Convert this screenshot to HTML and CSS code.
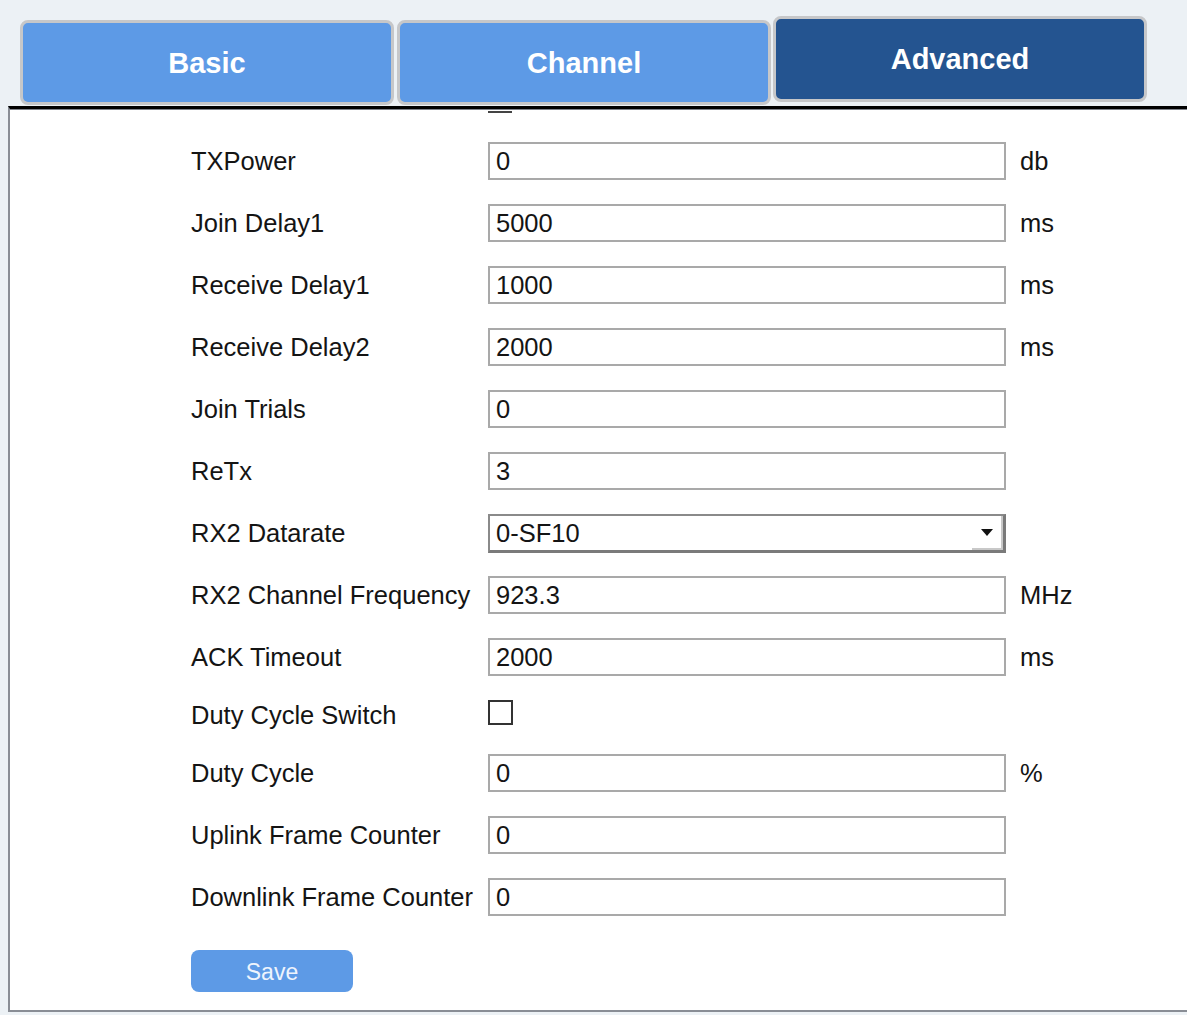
FILE: index.html
```html
<!DOCTYPE html>
<html>
<head>
<meta charset="utf-8">
<link rel="stylesheet" href="styles.css">
</head>
<body>
<div class="tabs">
  <div class="tab">Basic</div>
  <div class="tab">Channel</div>
  <div class="tab active">Advanced</div>
</div>
<div class="panel">
  <div class="clipped"></div>
  <div class="form">
    <div class="label">TXPower</div><div class="field"><div class="input">0</div></div><div class="unit">db</div>
    <div class="label">Join Delay1</div><div class="field"><div class="input">5000</div></div><div class="unit">ms</div>
    <div class="label">Receive Delay1</div><div class="field"><div class="input">1000</div></div><div class="unit">ms</div>
    <div class="label">Receive Delay2</div><div class="field"><div class="input">2000</div></div><div class="unit">ms</div>
    <div class="label">Join Trials</div><div class="field"><div class="input">0</div></div><div class="unit"></div>
    <div class="label">ReTx</div><div class="field"><div class="input">3</div></div><div class="unit"></div>
    <div class="label">RX2 Datarate</div><div class="field"><div class="select"><span>0-SF10</span><span class="arrow"><span class="tri"></span></span></div></div><div class="unit"></div>
    <div class="label">RX2 Channel Frequency</div><div class="field"><div class="input">923.3</div></div><div class="unit">MHz</div>
    <div class="label">ACK Timeout</div><div class="field"><div class="input">2000</div></div><div class="unit">ms</div>
    <div class="label short">Duty Cycle Switch</div><div class="field short"><div class="checkbox"></div></div><div class="unit short"></div>
    <div class="label">Duty Cycle</div><div class="field"><div class="input">0</div></div><div class="unit">%</div>
    <div class="label">Uplink Frame Counter</div><div class="field"><div class="input">0</div></div><div class="unit"></div>
    <div class="label">Downlink Frame Counter</div><div class="field"><div class="input">0</div></div><div class="unit"></div>
  </div>
  <div class="actions"><div class="save">Save</div></div>
</div>
</body>
</html>
```
FILE: styles.css
```css
html, body {
  margin: 0;
  padding: 0;
  background: #ecf1f5;
}
body {
  padding: 0 0 0 8px;
  font-family: "Liberation Sans", Arial, sans-serif;
  height: 1015px;
  overflow: hidden;
}
.tabs {
  display: flex;
  align-items: flex-end;
  padding: 0 0 0 12px;
  height: 106px;
  gap: 3px;
}
.tab {
  box-sizing: border-box;
  width: 374px;
  height: 85px;
  margin-bottom: 1px;
  background: #5d9ae6;
  border: 3px solid #c6c7c9;
  border-radius: 8px;
  color: #ffffff;
  font-weight: bold;
  font-size: 29px;
  display: flex;
  align-items: center;
  justify-content: center;
  padding-top: 2px;
}
.tab.active {
  background: #245490;
  height: 86px;
  margin-bottom: 4px;
  margin-left: -1px;
  padding-top: 0;
}
.panel {
  background: #ffffff;
  border-top: 3px solid #000000;
  border-left: 2px solid #898d95;
  border-bottom: 2px solid #898d95;
  box-shadow: inset 0 1px 0 #7e828a;
  padding: 1px 0 18px 0;
}
.clipped {
  margin-left: 478px;
  width: 24px;
  height: 1px;
  border-bottom: 2px solid #444444;
  margin-bottom: 29px;
}
.form {
  display: grid;
  grid-template-columns: 297px 518px auto;
  row-gap: 24px;
  padding-left: 181px;
  font-size: 25.5px;
  color: #141414;
}
.label, .unit {
  height: 38px;
  display: flex;
  align-items: center;
  white-space: nowrap;
}
.unit {
  padding-left: 14px;
}
.field {
  height: 38px;
}
.short {
  height: 30px;
}
.input {
  box-sizing: border-box;
  height: 38px;
  border: 2px solid #a9a9a9;
  padding-left: 6px;
  display: flex;
  align-items: center;
  background: #ffffff;
}
.select {
  box-sizing: border-box;
  height: 39px;
  border: 2px solid #8a8a8a;
  border-right: 3px solid #7a7a7a;
  border-bottom: 3px solid #7a7a7a;
  padding-left: 6px;
  display: flex;
  align-items: center;
  justify-content: space-between;
  background: #ffffff;
}
.arrow {
  box-sizing: border-box;
  align-self: stretch;
  width: 31px;
  border-right: 2px solid #c8c8c8;
  border-bottom: 2px solid #c8c8c8;
  display: flex;
  align-items: center;
  justify-content: center;
  padding-top: 1px;
}
.tri {
  width: 0;
  height: 0;
  border-left: 6px solid transparent;
  border-right: 6px solid transparent;
  border-top: 7px solid #111111;
}
.checkbox {
  box-sizing: border-box;
  width: 25px;
  height: 25px;
  border: 2px solid #333333;
  background: #ffffff;
}
.actions {
  padding: 34px 0 0 181px;
}
.save {
  box-sizing: border-box;
  width: 162px;
  height: 42px;
  padding-top: 3px;
  background: #5d9ae6;
  border-radius: 8px;
  color: #eef4fd;
  font-size: 23px;
  display: flex;
  align-items: center;
  justify-content: center;
}
```
